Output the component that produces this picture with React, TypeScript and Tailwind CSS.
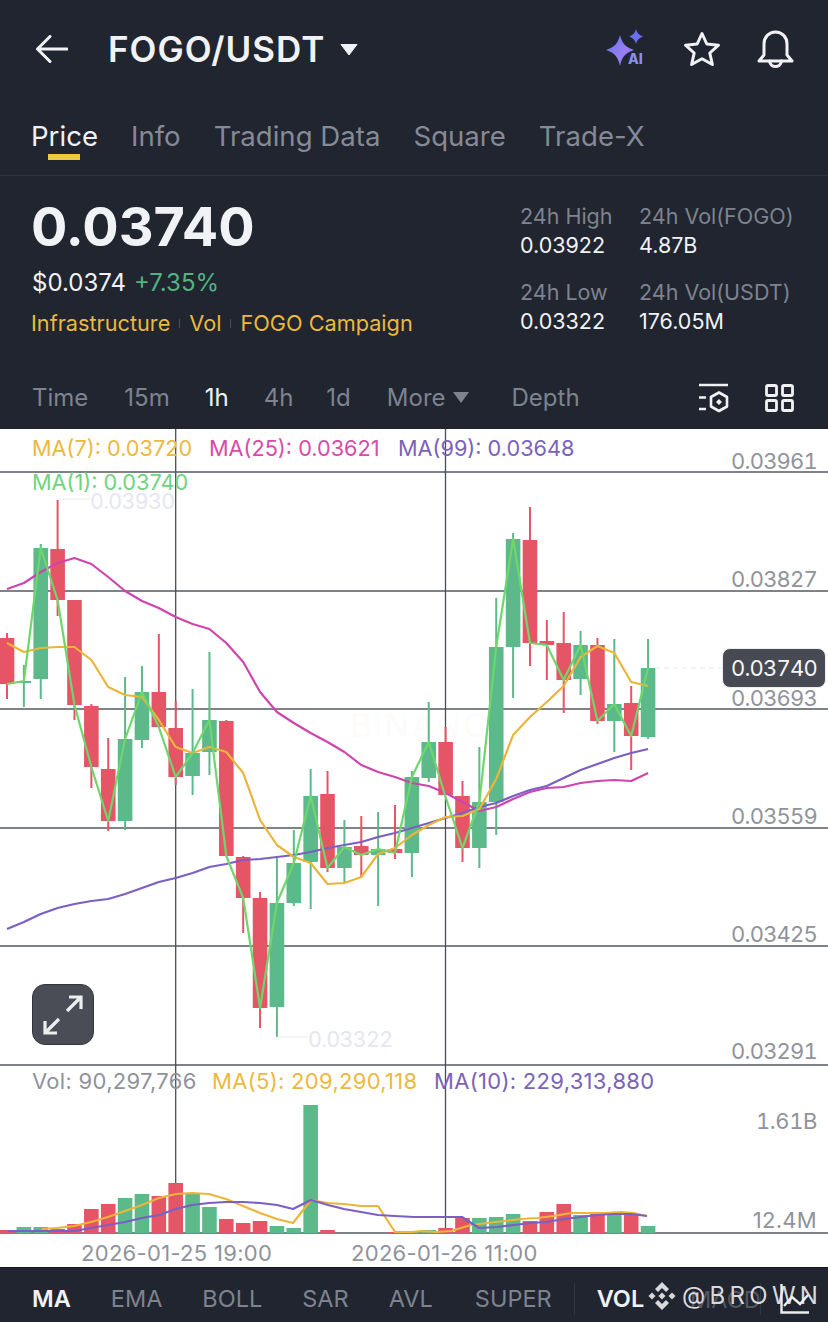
import React from 'react';

const FONT = "font-['Inter','Open_Sans',sans-serif]";

// [isGreen, bodyTop, bodyBottom, wickTop, wickBottom]
type Candle = [boolean, number, number, number, number];

const candles: Candle[] = [
  [false, 638, 684, 633, 699],
  [true, 681, 683, 665, 707],
  [true, 548, 679, 544, 699],
  [false, 549, 600, 500, 616],
  [false, 600, 705, 600, 720],
  [false, 706, 767, 704, 788],
  [false, 769, 821, 738, 831],
  [true, 739, 821, 677, 830],
  [true, 692, 740, 666, 748],
  [false, 692, 727, 634, 727],
  [false, 728, 777, 701, 785],
  [true, 753, 776, 689, 795],
  [true, 720, 752, 652, 775],
  [false, 721, 856, 720, 856],
  [false, 857, 898, 856, 933],
  [false, 898, 1008, 892, 1028],
  [true, 903, 1007, 857, 1037],
  [true, 863, 903, 830, 906],
  [true, 796, 862, 769, 909],
  [false, 794, 868, 771, 872],
  [true, 847, 868, 820, 883],
  [false, 846, 855, 816, 878],
  [true, 849, 855, 812, 906],
  [false, 849, 853, 805, 859],
  [true, 777, 853, 771, 877],
  [true, 742, 778, 702, 782],
  [false, 742, 795, 727, 795],
  [false, 796, 848, 781, 862],
  [true, 802, 848, 747, 868],
  [true, 647, 802, 598, 835],
  [true, 539, 647, 533, 698],
  [false, 540, 643, 507, 666],
  [false, 641, 645, 620, 680],
  [false, 643, 680, 612, 713],
  [true, 645, 679, 631, 695],
  [false, 645, 721, 638, 724],
  [true, 704, 721, 639, 752],
  [false, 703, 736, 686, 770],
  [true, 668, 737, 639, 739],
];

const ma1 = [684, 681, 548, 600, 705, 767, 821, 739, 692, 727, 777, 753, 720, 856, 898, 1008, 903, 863, 796, 868, 847, 855, 849, 853, 777, 742, 797, 848, 802, 647, 539, 643, 645, 680, 645, 721, 704, 736, 668];
const ma7 = [643, 652, 648, 647, 647, 660, 687, 695, 697, 720, 747, 753, 747, 752, 773, 820, 845, 857, 863, 884, 883, 877, 854, 848, 835, 825, 817, 816, 809, 779, 735, 717, 702, 686, 657, 646, 653, 682, 686];
const ma25 = [589, 583, 572, 563, 558, 564, 577, 591, 601, 608, 617, 624, 629, 643, 662, 692, 712, 723, 733, 742, 752, 765, 772, 777, 783, 786, 793, 802, 811, 807, 799, 792, 788, 787, 783, 781, 780, 781, 773];
const ma99 = [929, 922, 914, 908, 904, 901, 899, 894, 888, 882, 878, 873, 867, 864, 860, 859, 857, 855, 852, 848, 845, 842, 837, 833, 828, 823, 818, 813, 807, 803, 796, 790, 786, 778, 770, 764, 758, 753, 749];

// volume bar tops, base line is 1233
const volTops = [1230, 1227, 1227, 1229, 1224, 1209, 1204, 1198, 1194, 1196, 1183, 1193, 1207, 1219, 1223, 1221, 1226, 1228, 1105, 1230, 1233, 1233, 1233, 1232, 1232, 1230, 1228, 1218, 1218, 1217, 1214, 1221, 1212, 1204, 1215, 1214, 1215, 1214, 1226];
const volMa5 = '42,1229 57,1228 74,1226 91,1222 108,1217 125,1211 142,1205 159,1198 176,1194 192,1193 209,1194 226,1199 243,1206 260,1213 277,1219 293,1223 311,1200 328,1203 344,1204 361,1206 378,1206 395,1232 412,1232 421,1231 437,1232 451,1231 471,1225 487,1223 504,1221 521,1219 537,1218 554,1216 571,1213 587,1213 604,1213 621,1212 634,1213 647,1216';
const volMa10 = '8,1231 41,1231 57,1231 74,1231 91,1228 108,1225 125,1222 142,1218 159,1215 176,1209 192,1205 209,1203 226,1202 243,1202 260,1203 277,1205 293,1209 311,1200 328,1205 344,1209 361,1212 378,1215 395,1216 414,1217 462,1217 479,1228 497,1227 514,1225 531,1223 547,1222 564,1219 581,1217 597,1215 614,1214 631,1214 647,1216';

const xAt = (i: number) => 7 + i * 16.87;
const toPoints = (ys: number[]) => ys.map((y, i) => `${xAt(i).toFixed(1)},${y}`).join(' ');

const RED = '#e55566';
const GREEN = '#5bb98a';
const CHART_TOP = 429;

const ChartDrawing = () => (
  <svg className="absolute inset-0" width="828" height="838" viewBox={`0 ${CHART_TOP} 828 838`}>
    {[472, 591, 709, 828, 946, 1065, 1233].map((y) => (
      <line key={y} x1="0" x2="828" y1={y} y2={y} stroke="#55585f" strokeWidth="1.4" />
    ))}
    {[175.7, 445.5].map((x) => (
      <line key={x} x1={x} x2={x} y1={CHART_TOP} y2="1233" stroke="#4a4d55" strokeWidth="1.3" />
    ))}
    {candles.map(([up, top, bottom, wickTop, wickBottom], i) => {
      const color = up ? GREEN : RED;
      return (
        <g key={i}>
          <line x1={xAt(i)} x2={xAt(i)} y1={wickTop} y2={wickBottom} stroke={color} strokeWidth="2" />
          <rect x={xAt(i) - 7.3} y={top} width="14.6" height={bottom - top} fill={color} />
        </g>
      );
    })}
    <polyline points={toPoints(ma25)} fill="none" stroke="#d044ad" strokeWidth="2.2" strokeLinejoin="round" />
    <polyline points={toPoints(ma99)} fill="none" stroke="#7b5fc4" strokeWidth="2.2" strokeLinejoin="round" />
    <polyline points={toPoints(ma7)} fill="none" stroke="#ecb53a" strokeWidth="2.2" strokeLinejoin="round" />
    <polyline points={toPoints(ma1)} fill="none" stroke="#6fd66c" strokeWidth="2.2" strokeLinejoin="round" />

    {/* leaders for high / low, last price */}
    <line x1="60" x2="90" y1="499" y2="499" stroke="#e8e9ee" strokeWidth="1" />
    <line x1="277" x2="308" y1="1037" y2="1037" stroke="#e8e9ee" strokeWidth="1" />
    <line x1="655" x2="722" y1="668" y2="668" stroke="#e6e7ea" strokeWidth="1" strokeDasharray="5 4" />

    {/* volume */}
    {volTops.map((top, i) => (
      <rect key={i} x={xAt(i) - 7.3} y={top} width="14.6" height={1233 - top} fill={candles[i][0] ? GREEN : RED} />
    ))}
    <polyline points={volMa5} fill="none" stroke="#ecb53a" strokeWidth="2.2" strokeLinejoin="round" />
    <polyline points={volMa10} fill="none" stroke="#7b5fc4" strokeWidth="2.2" strokeLinejoin="round" />
  </svg>
);

const AiIcon = () => (
  <svg width="44" height="40" viewBox="0 0 44 40">
    <defs>
      <linearGradient id="ai" x1="0" y1="0" x2="1" y2="1">
        <stop offset="0" stopColor="#5f6ff0" />
        <stop offset="0.6" stopColor="#9a80f0" />
        <stop offset="1" stopColor="#6a6cf0" />
      </linearGradient>
    </defs>
    <path d="M15 6 C17 14 20 18 29 21 C20 24 17 28 15 37 C13 28 10 24 1 21 C10 18 13 14 15 6Z" fill="url(#ai)" />
    <path d="M31 0 C32 4 34 6 38 7.5 C34 9 32 11 31 15 C30 11 28 9 24 7.5 C28 6 30 4 31 0Z" fill="#6a70f2" />
    <text x="23" y="35" fontSize="14" fontWeight="800" fill="#8d8cf2">AI</text>
  </svg>
);

const Tab = ({ label, active, className }: { label: string; active?: boolean; className?: string }) => (
  <div className={`relative ${className ?? ''} ${active ? 'text-[#f1f2f5]' : 'text-[#858a96]'}`}>
    {label}
    {active && <div className="absolute left-[17px] top-[37px] w-8 h-[6px] bg-[#f0c93f]" />}
  </div>
);

const Stat = ({ label, value }: { label: string; value: string }) => (
  <div className="flex flex-col">
    <span className="text-[21.5px] leading-[29px] text-[#7e8390]">{label}</span>
    <span className="text-[21.5px] leading-[29px] text-[#f1f2f5]">{value}</span>
  </div>
);

export default function App() {
  const priceLabels = [
    ['0.03961', 'top-[19px]'],
    ['0.03827', 'top-[137px]'],
    ['0.03693', 'top-[256px]'],
    ['0.03559', 'top-[374px]'],
    ['0.03425', 'top-[492px]'],
    ['0.03291', 'top-[609px]'],
  ];

  return (
    <div className={`w-[828px] h-[1322px] overflow-hidden flex flex-col bg-[#20252f] ${FONT}`}>
      {/* Top bar */}
      <div className="h-[98px] flex items-center pl-9 pr-[34px] text-[#f1f2f5]">
        <svg width="32" height="28" viewBox="0 0 32 28" fill="none" stroke="#f1f2f5" strokeWidth="3" strokeLinecap="round" strokeLinejoin="round">
          <path d="M1.5 14H31M14 1.5L1.5 14L14 26.5" />
        </svg>
        <span className="ml-10 text-[35px] leading-none font-semibold tracking-[1px]">FOGO/USDT</span>
        <svg className="ml-[15px]" width="18" height="13" viewBox="0 0 18 13">
          <path d="M1 1.5 H17 L9 12Z" fill="#f1f2f5" stroke="#f1f2f5" strokeLinejoin="round" />
        </svg>
        <div className="ml-auto flex items-center">
          <AiIcon />
          <svg className="ml-[34px]" width="38" height="36" viewBox="0 0 38 36" fill="none" stroke="#f1f2f5" strokeWidth="3" strokeLinejoin="round">
            <path d="M19 2.5 L23.8 13 L35.5 14.2 L26.8 22 L29.4 33.5 L19 27.7 L8.6 33.5 L11.2 22 L2.5 14.2 L14.2 13Z" />
          </svg>
          <svg className="ml-9" width="37" height="38" viewBox="0 0 37 38" fill="none" stroke="#f1f2f5" strokeWidth="3" strokeLinejoin="round" strokeLinecap="round">
            <path d="M7 25 V14 C7 7 12 2 18.5 2 C25 2 30 7 30 14 V25 L35 31 H2 Z" />
            <path d="M12.5 31 C13 35 16 36.5 18.5 36.5 C21 36.5 24 35 24.5 31" />
          </svg>
        </div>
      </div>

      {/* Tabs */}
      <div className="h-[78px] flex pt-[19px] pl-[31px] gap-[33px] text-[27.6px] leading-[38px] border-b border-[#30353f]">
        <Tab label="Price" active />
        <Tab label="Info" />
        <Tab label="Trading Data" />
        <Tab label="Square" />
        <Tab label="Trade-X" />
      </div>

      {/* Price summary */}
      <div className="h-[176px] flex pl-8 pt-[19px]">
        <div className="w-[488px] flex flex-col">
          <div className="text-[54px] leading-[64px] font-bold text-[#f1f2f5] -ml-px">0.03740</div>
          <div className="mt-[9px] flex gap-[8px] text-[24px] leading-[30px]">
            <span className="text-[#f1f2f5]">$0.0374</span>
            <span className="text-[#4fb583]">+7.35%</span>
          </div>
          <div className="mt-[10px] -ml-px flex items-center text-[21.7px] leading-[30px] text-[#eab93d]">
            <span>Infrastructure</span>
            <span className="mx-[9px] w-px h-[9px] bg-[#4a4f5a]" />
            <span>Vol</span>
            <span className="mx-[9px] w-px h-[9px] bg-[#4a4f5a]" />
            <span>FOGO Campaign</span>
          </div>
        </div>
        <div className="grid grid-cols-[119px_auto] gap-y-[18px] mt-[7px] h-fit">
          <Stat label="24h High" value="0.03922" />
          <Stat label="24h Vol(FOGO)" value="4.87B" />
          <Stat label="24h Low" value="0.03322" />
          <Stat label="24h Vol(USDT)" value="176.05M" />
        </div>
      </div>

      {/* Timeframes */}
      <div className="h-[77px] flex items-center pl-8 pr-[34px] pt-[14px] text-[24px] text-[#7e8390]">
        <span>Time</span>
        <span className="ml-[36px]">15m</span>
        <span className="ml-[35px] text-[#f1f2f5]">1h</span>
        <span className="ml-[35px]">4h</span>
        <span className="ml-[33px]">1d</span>
        <span className="ml-[36px]">More</span>
        <svg className="ml-[7px]" width="16" height="11" viewBox="0 0 16 11">
          <path d="M0 0 H16 L8 11Z" fill="#7e8390" />
        </svg>
        <span className="ml-[43px]">Depth</span>
        <svg className="ml-auto" width="33" height="30" viewBox="0 0 33 30" fill="none" stroke="#f1f2f5" strokeWidth="2.6">
          <path d="M1 2 H30 M1 14.5 H8 M1 26 H8" />
          <path d="M21 9.5 L29 14 V23.5 L21 28 L13 23.5 V14Z" strokeLinejoin="round" />
          <path d="M21 16 L24 19 L21 22 L18 19Z" fill="#f1f2f5" stroke="none" />
        </svg>
        <svg className="ml-[34px]" width="29" height="28" viewBox="0 0 29 28" fill="none" stroke="#f1f2f5" strokeWidth="2.8">
          <rect x="1.5" y="1.5" width="10" height="10" rx="1.5" />
          <rect x="17.5" y="1.5" width="10" height="10" rx="1.5" />
          <rect x="1.5" y="16.5" width="10" height="10" rx="1.5" />
          <rect x="17.5" y="16.5" width="10" height="10" rx="1.5" />
        </svg>
      </div>

      {/* Chart */}
      <div className="relative h-[838px] bg-white text-[22px] leading-[26px] tracking-[0.3px]">
        <span className="absolute left-[350px] top-[283px] text-[33px] leading-[26px] tracking-[2px] text-[#fdfcfb]">BINANCE</span>
        <ChartDrawing />
        <span className="absolute left-8 top-[6px] text-[21.7px] tracking-normal text-[#ecb93f]">MA(7): 0.03720</span>
        <span className="absolute left-[209px] top-[6px] text-[21.7px] tracking-normal text-[#d84aa9]">MA(25): 0.03621</span>
        <span className="absolute left-[398px] top-[6px] text-[21.7px] tracking-normal text-[#7b62b8]">MA(99): 0.03648</span>
        <span className="absolute left-8 top-[40px] text-[21.7px] tracking-normal text-[#6fd47e]">MA(1): 0.03740</span>
        <span className="absolute left-[90px] top-[59px] text-[21.5px] tracking-[-0.7px] tabular-nums text-[#e6e7ee]">0.03930</span>
        <span className="absolute left-[308px] top-[597px] text-[21.5px] tracking-[-0.7px] tabular-nums text-[#e6e7ee]">0.03322</span>

        {priceLabels.map(([value, top]) => (
          <span key={value} className={`absolute right-[11px] ${top} tracking-[-0.8px] tabular-nums text-[#8f939b]`}>{value}</span>
        ))}

        <div className="absolute left-[722px] top-[219px] w-[104px] h-[40px] rounded-lg bg-[#474a53] border border-[#eceef2] flex items-center justify-center tracking-[-0.8px] tabular-nums text-[#f5f6f8]">
          0.03740
        </div>

        <div className="absolute left-[32px] top-[555px] w-[62px] h-[61px] rounded-[13px] bg-[#4a4d56] border border-[#33363e] flex items-center justify-center">
          <svg width="42" height="42" viewBox="0 0 42 42" fill="none" stroke="#eceef0" strokeWidth="3.2">
            <path d="M25 17 L39 3 M27 3 H39 V15" />
            <path d="M17 25 L3 39 M3 27 V39 H15" />
          </svg>
        </div>

        <span className="absolute left-8 top-[639px] text-[#8e929c]">Vol: 90,297,766</span>
        <span className="absolute left-[212px] top-[639px] text-[#ecb93f]">MA(5): 209,290,118</span>
        <span className="absolute left-[434px] top-[639px] text-[#7b62b8]">MA(10): 229,313,880</span>
        <span className="absolute right-[11px] top-[679px] tracking-[-0.4px] tabular-nums text-[#8f939b]">1.61B</span>
        <span className="absolute right-[11px] top-[778px] text-[#8f939b]">12.4M</span>
        <span className="absolute left-[81px] top-[811px] text-[#8f939b]">2026-01-25 19:00</span>
        <span className="absolute left-[351px] top-[811px] text-[#8f939b]">2026-01-26 11:00</span>
      </div>

      {/* Indicators */}
      <div className="relative h-[55px] flex items-center pl-8 pt-[8px] text-[23.5px] text-[#7e8390] border-t border-[#15181e]">
        <span className="font-semibold text-[#f1f2f5]">MA</span>
        <span className="ml-[40px]">EMA</span>
        <span className="ml-[40px]">BOLL</span>
        <span className="ml-[40px]">SAR</span>
        <span className="ml-[40px]">AVL</span>
        <span className="ml-[42px]">SUPER</span>
        <span className="ml-[22px] w-px h-[32px] bg-[#30353f]" />
        <span className="ml-[22px] font-semibold text-[#f1f2f5]">VOL</span>
        <span className="absolute left-[690px] top-[14px] text-[#53575f]">MACD</span>
        <span className="absolute left-[760px] top-[15px] w-px h-[32px] bg-[#30353f]" />

        {/* watermark */}
        <svg className="absolute left-[648px] top-[14px]" width="28" height="28" viewBox="0 0 28 28" fill="#d8d9dd">
          <path d="M14 0 L21 7 L18 10 L14 6 L10 10 L7 7Z" />
          <path d="M14 28 L7 21 L10 18 L14 22 L18 18 L21 21Z" />
          <path d="M4 10.5 L7.5 14 L4 17.5 L0.5 14Z" />
          <path d="M24 10.5 L27.5 14 L24 17.5 L20.5 14Z" />
          <path d="M14 10.5 L17.5 14 L14 17.5 L10.5 14Z" />
        </svg>
        <span className="absolute left-[682px] top-[11px] text-[24px] leading-[34px] tracking-[4.3px] text-[#d8d9dd]">@BROWN</span>
        <svg className="absolute left-[780px] top-[16px]" width="30" height="30" viewBox="0 0 30 30" fill="none" stroke="#eceef0" strokeWidth="2.4">
          <path d="M1.5 0 V28.5 H29" />
          <path d="M4 22 L12 13 L20 20 L28 11" />
        </svg>
      </div>
    </div>
  );
}
